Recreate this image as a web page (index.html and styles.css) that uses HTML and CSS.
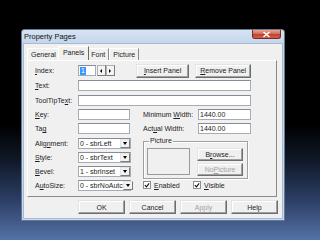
FILE: index.html
```html
<!DOCTYPE html>
<html>
<head>
<meta charset="utf-8">
<link rel="stylesheet" href="styles.css">
</head>
<body>
<div class="desk">
  <div class="window">
    <div class="titlebar">
      <span class="title">Property Pages</span>
      <span class="close"><svg width="9" height="7" viewBox="0 0 9 7"><path d="M1.5 1 L7.5 6 M7.5 1 L1.5 6" stroke="#fff" stroke-width="1.6"/></svg></span>
    </div>
    <div class="client">
      <div class="tabs">
        <span class="tab">General</span>
        <span class="tab sel">Panels</span>
        <span class="tab">Font</span>
        <span class="tab">Picture</span>
      </div>
      <div class="panel">
        <div class="form">
          <span class="lbl"><u>I</u>ndex:</span>
          <div class="indexrow">
            <span class="input idx"><span class="hl">1</span></span>
            <span class="spin"><i class="tl"></i></span>
            <span class="spin"><i class="tr"></i></span>
            <span class="btn ins"><u>I</u>nsert Panel</span>
            <span class="btn rem"><u>R</u>emove Panel</span>
          </div>

          <span class="lbl"><u>T</u>ext:</span>
          <span class="input wide"></span>

          <span class="lbl">ToolTipTe<u>x</u>t:</span>
          <span class="input wide"></span>

          <span class="lbl"><u>K</u>ey:</span>
          <span class="input short"></span>
          <div class="pair"><span class="plbl">Minimum <u>W</u>idth:</span><span class="input num">1440.00</span></div>

          <span class="lbl">Ta<u>g</u></span>
          <span class="input short"></span>
          <div class="pair"><span class="plbl">Act<u>u</u>al Width:</span><span class="input num">1440.00</span></div>

          <span class="lbl">Alig<u>n</u>ment:</span>
          <span class="combo"><span class="ctext">0 - sbrLeft</span><span class="drop"><i></i></span></span>

          <fieldset class="group">
            <legend>Picture</legend>
            <div class="groupbody">
              <span class="picbox"></span>
              <div class="picbtns">
                <span class="btn pb">B<u>r</u>owse...</span>
                <span class="btn pb dis">No <u>P</u>icture</span>
              </div>
            </div>
          </fieldset>

          <span class="lbl"><u>S</u>tyle:</span>
          <span class="combo"><span class="ctext">0 - sbrText</span><span class="drop"><i></i></span></span>

          <span class="lbl"><u>B</u>evel:</span>
          <span class="combo"><span class="ctext">1 - sbrInset</span><span class="drop"><i></i></span></span>

          <span class="lbl">A<u>u</u>toSize:</span>
          <span class="combo"><span class="ctext">0 - sbrNoAutc</span><span class="drop"><i></i></span></span>
          <div class="checks">
            <span class="chk"><span class="box"><svg width="7" height="7" viewBox="0 0 7 7"><path d="M1 3.2 L2.8 5.2 L6 1" fill="none" stroke="#111" stroke-width="1.3"/></svg></span><u>E</u>nabled</span>
            <span class="chk"><span class="box"><svg width="7" height="7" viewBox="0 0 7 7"><path d="M1 3.2 L2.8 5.2 L6 1" fill="none" stroke="#111" stroke-width="1.3"/></svg></span><u>V</u>isible</span>
          </div>
        </div>
      </div>
      <div class="buttons">
        <span class="btn db">OK</span>
        <span class="btn db">Cancel</span>
        <span class="btn db dis">Apply</span>
        <span class="btn db">Help</span>
      </div>
    </div>
  </div>
</div>
</body>
</html>
```
FILE: styles.css
```css
html, body {
  margin: 0;
  padding: 0;
}
body {
  width: 320px;
  height: 240px;
  overflow: hidden;
  background: linear-gradient(180deg, #000 0%, #000 52%, #121b2c 68%, #2d4068 84%, #5572a6 100%);
  font-family: "Liberation Sans", Arial, sans-serif;
  font-size: 7px;
  color: #1c1c1c;
}
.desk {
  position: relative;
  width: 320px;
  height: 240px;
}
.window {
  position: absolute;
  left: 21px;
  top: 29px;
  width: 264px;
  height: 192px;
  box-sizing: border-box;
  border: 1px solid #65788f;
  border-radius: 3px 3px 0 0;
  background: linear-gradient(180deg, #d6e3f3 0px, #c3d5ec 14px, #c7d9ef 100%);
  padding: 0 2px 2px;
  display: flex;
  flex-direction: column;
}
.titlebar {
  height: 14px;
  display: flex;
  align-items: flex-start;
  justify-content: space-between;
}
.title {
  font-size: 7.5px;
  line-height: 14px;
  color: #111;
}
.close {
  width: 29px;
  height: 9px;
  margin-right: 1px;
  box-sizing: border-box;
  border: 1px solid #7a2a22;
  border-top: none;
  border-radius: 0 0 3px 3px;
  background: linear-gradient(180deg, #e8a493 0%, #d27160 45%, #c1422f 55%, #d0604a 100%);
  display: flex;
  align-items: center;
  justify-content: center;
}
.close svg { display: block; }
.client {
  flex: 1;
  background: #f0f0f0;
  display: flex;
  flex-direction: column;
  box-shadow: 0 0 0 1px #a9bbd3;
}
.tabs {
  height: 16px;
  display: flex;
  align-items: flex-end;
  padding-left: 3px;
}
.tab {
  box-sizing: border-box;
  height: 12px;
  line-height: 11px;
  padding: 0 3px;
  border: 1px solid #a0a0a0;
  border-color: #fff #8a8a8a transparent #fff;
  border-bottom: none;
}
.tab.sel {
  height: 14px;
  line-height: 12px;
  margin: 0 -2px;
  padding: 0 4px;
  position: relative;
  z-index: 1;
  background: #f0f0f0;
  border-right-color: #6a6a6a;
}
.panel {
  margin: 0 5px 0 3px;
  height: 137px;
  box-sizing: border-box;
  border: 1px solid;
  border-color: #fff #8a8a8a #8a8a8a #fff;
  padding: 2px 0 0 7px;
}
.form {
  display: grid;
  grid-template-columns: 43px 65px 108px;
  grid-template-rows: 15px 15px 14px 14px 15px 14px 14px 14px 14px;
  align-items: center;
}
.lbl {
  grid-column: 1;
  white-space: nowrap;
}
.input {
  box-sizing: border-box;
  height: 11px;
  background: #fff;
  border: 1px solid #a5acb5;
  border-top-color: #858c96;
  display: flex;
  align-items: center;
  padding-left: 1px;
  line-height: 9px;
}
.indexrow {
  grid-column: 2 / span 2;
  display: flex;
  align-items: center;
}
.idx {
  width: 18px;
}
.hl {
  background: #3399ff;
  color: #fff;
  padding: 0 1px;
  line-height: 8px;
}
.spin {
  box-sizing: border-box;
  width: 9px;
  height: 11px;
  margin-left: 1px;
  border: 1px solid #b0b0b0;
  border-right-color: #7c7c7c;
  border-bottom-color: #7c7c7c;
  background: #f4f4f4;
  display: flex;
  align-items: center;
  justify-content: center;
}
.spin + .spin { margin-left: 0; }
.tl {
  width: 0; height: 0;
  border-top: 2px solid transparent;
  border-bottom: 2px solid transparent;
  border-right: 2px solid #000;
}
.tr {
  width: 0; height: 0;
  border-top: 2px solid transparent;
  border-bottom: 2px solid transparent;
  border-left: 2px solid #000;
}
.btn {
  box-sizing: border-box;
  height: 14px;
  display: flex;
  align-items: center;
  justify-content: center;
  background: #f0f0f0;
  border: 1px solid;
  border-color: #e4e4e4 #6e6e6e #6e6e6e #e4e4e4;
  box-shadow: inset -1px -1px 0 #a0a0a0, inset 1px 1px 0 #fff;
  white-space: nowrap;
}
.btn.dis { color: #a3a3a3; }
.ins {
  width: 54px;
  margin-left: 21px;
}
.rem {
  width: 56px;
  margin-left: 6px;
}
.wide {
  grid-column: 2 / span 2;
  width: 173px;
}
.short {
  grid-column: 2;
  width: 52px;
}
.pair {
  grid-column: 3;
  display: flex;
  align-items: center;
}
.plbl {
  width: 55px;
  white-space: nowrap;
}
.num {
  width: 53px;
}
.combo {
  grid-column: 2;
  box-sizing: border-box;
  width: 53px;
  height: 11px;
  background: #fff;
  border: 1px solid #a5acb5;
  border-top-color: #858c96;
  display: flex;
  align-items: center;
}
.ctext {
  flex: 1;
  padding-left: 1px;
  white-space: nowrap;
  line-height: 9px;
}
.drop {
  box-sizing: border-box;
  width: 10px;
  height: 9px;
  flex: none;
  background: #f2f2f2;
  border: 1px solid;
  border-color: #e6e6e6 #7c7c7c #7c7c7c #e6e6e6;
  display: flex;
  align-items: center;
  justify-content: center;
}
.drop i {
  width: 0; height: 0;
  border-left: 2.5px solid transparent;
  border-right: 2.5px solid transparent;
  border-top: 3px solid #000;
}
.group {
  grid-column: 3;
  grid-row: 6 / span 3;
  align-self: start;
  margin: 1px 0 0 0;
  width: 105px;
  box-sizing: border-box;
  padding: 0 0 2px 3px;
  border: 1px solid #a0a0a0;
  box-shadow: 1px 1px 0 #fff, inset 1px 1px 0 #fff;
}
.group legend {
  padding: 0 1px;
  margin-left: 2px;
  line-height: 8px;
}
.groupbody {
  display: flex;
  margin-top: 3px;
}
.picbox {
  box-sizing: border-box;
  width: 43px;
  height: 27px;
  border: 1px solid #9a9a9a;
  background: #f0f0f0;
}
.picbtns {
  margin-left: 7px;
  display: flex;
  flex-direction: column;
  gap: 2px;
}
.pb {
  width: 46px;
  height: 13px;
}
.checks {
  grid-column: 3;
  display: flex;
  align-items: center;
}
.chk {
  display: flex;
  align-items: center;
  width: 50px;
}
.box {
  box-sizing: border-box;
  width: 8px;
  height: 8px;
  border: 1px solid #8e8f8f;
  background: #fff;
  margin-right: 3px;
  display: flex;
  align-items: center;
  justify-content: center;
}
.box svg { display: block; }
.buttons {
  display: flex;
  gap: 4px;
  padding-left: 54px;
  margin-top: 3px;
}
.db {
  width: 47px;
}
```
